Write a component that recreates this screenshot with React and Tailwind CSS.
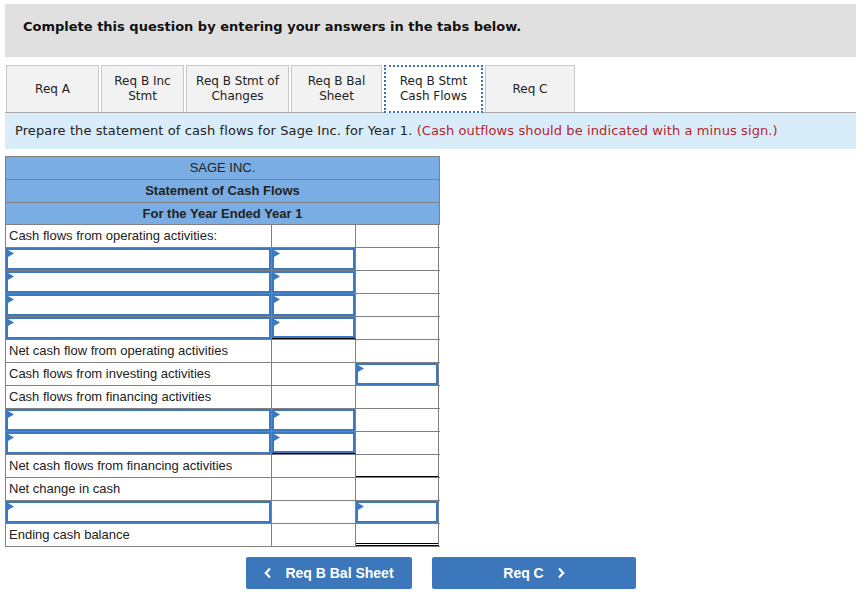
import React from "react";

const tabs = [
  ["Req A"],
  ["Req B Inc", "Stmt"],
  ["Req B Stmt of", "Changes"],
  ["Req B Bal", "Sheet"],
  ["Req B Stmt", "Cash Flows"],
  ["Req C"],
];
const tabW = ["w-[93px]", "w-[83px]", "w-[103px]", "w-[91px]", "w-[99px]", "w-[90px]"];

// in1/in2/in3 = input cell in that column, b = black rule under cell, d3 = double rule
const rows = [
  { label: "Cash flows from operating activities:" },
  { in1: true, in2: true },
  { in1: true, in2: true },
  { in1: true, in2: true },
  { in1: true, in2: true, b2: true },
  { label: "Net cash flow from operating activities" },
  { label: "Cash flows from investing activities", in3: true },
  { label: "Cash flows from financing activities" },
  { in1: true, in2: true },
  { in1: true, in2: true, b2: true },
  { label: "Net cash flows from financing activities", b3: true },
  { label: "Net change in cash" },
  { in1: true, in3: true },
  { label: "Ending cash balance", d3: true },
];

function Tri() {
  return (
    <svg className="absolute left-0 top-0" width="6" height="7" viewBox="0 0 6 7">
      <path d="M0 0 L6 3.5 L0 7 Z" fill="#3b78c2" />
    </svg>
  );
}

function Input() {
  return (
    <div className="relative h-full border-2 border-[#3b78c2] bg-white">
      <Tri />
    </div>
  );
}

export default function App() {
  return (
    <div className="w-[866px] h-[608px] bg-white relative" style={{ fontFamily: "'DejaVu Sans', Verdana, sans-serif" }}>
      <div className="pt-1 pl-[5px]">
        <div className="w-[851px] h-[53px] bg-[#e0e0e0] pl-[18px] pt-[13px] text-[13px] font-bold text-[#111]">
          Complete this question by entering your answers in the tabs below.
        </div>
      </div>

      {/* tabs */}
      <div className="ml-[5px] w-[851px] mt-2 flex items-end gap-[2px] pl-[1px] border-b border-[#aaa] h-[48px]">
        {tabs.map((t, i) => {
          const active = i === 4;
          return (
            <div
              key={i}
              className={
                tabW[i] +
                " flex flex-col items-center justify-center text-[12px] leading-[15px] text-[#222] " +
                (active
                  ? "bg-white border-2 border-dotted border-[#3b6fb6] -mb-[1px] h-[48px]"
                  : "bg-[#f2f2f2] border border-b-0 border-[#c8c8c8] h-[47px]")
              }
            >
              {t.map((l, j) => (
                <span key={j}>{l}</span>
              ))}
            </div>
          );
        })}
      </div>

      <div className="ml-[5px] w-[851px] h-[36px] bg-[#d9ecf9] pl-[10px] flex items-center text-[13px] tracking-[0.1px] text-[#222]">
        Prepare the statement of cash flows for Sage Inc. for Year 1.&nbsp;
        <span className="text-[#b5252b]">(Cash outflows should be indicated with a minus sign.)</span>
      </div>

      {/* table */}
      <div className="ml-[5px] mt-[7px] w-[435px] text-[13px] text-[#222]" style={{ fontFamily: "'Liberation Sans', Arial, sans-serif" }}>
        <div className="border border-b-0 border-[#808080] bg-[#7aade4]">
          <div className="h-[23px] flex items-center justify-center border-b border-[#808080]">SAGE INC.</div>
          <div className="h-[23px] flex items-center justify-center border-b border-[#808080] font-bold">Statement of Cash Flows</div>
          <div className="h-[22px] flex items-center justify-center border-b border-[#808080] font-bold">For the Year Ended Year 1</div>
        </div>
        <div className="border-l border-[#808080]">
          {rows.map((r, i) => (
            <div key={i} className="flex h-[23px] border-b border-[#808080]">
              <div className="w-[266px] border-r border-[#808080] h-full">
                {r.in1 ? (
                  <Input />
                ) : (
                  <div className="pl-[3px] h-full flex items-center">{r.label}</div>
                )}
              </div>
              <div className={"w-[84px] border-r border-[#808080] h-full " + (r.b2 ? "border-b border-b-black" : "")}>
                {r.in2 && <Input />}
              </div>
              <div
                className={
                  "w-[83px] border-r border-[#808080] h-full " +
                  (r.b3 ? "border-b border-b-black " : "") +
                  (r.d3 ? "border-b-[3px] border-double border-b-black" : "")
                }
              >
                {r.in3 && <Input />}
              </div>
            </div>
          ))}
        </div>
      </div>

      {/* nav buttons */}
      <div className="mt-[10px] flex gap-[20px] pl-[246px]" style={{ fontFamily: "'Liberation Sans', Arial, sans-serif" }}>
        <button className="w-[166px] h-[32px] rounded-[2px] bg-[#3c77bc] text-white font-bold text-[14px] flex items-center justify-center gap-[13px]">
          <svg width="8" height="12" viewBox="0 0 8 12">
            <path d="M6 1.5 L1.8 6 L6 10.5" stroke="white" strokeWidth="2.2" fill="none" />
          </svg>
          Req B Bal Sheet
        </button>
        <button className="w-[204px] h-[32px] rounded-[2px] bg-[#3c77bc] text-white font-bold text-[14px] flex items-center justify-center gap-[13px]">
          Req C
          <svg width="8" height="12" viewBox="0 0 8 12">
            <path d="M2 1.5 L6.2 6 L2 10.5" stroke="white" strokeWidth="2.2" fill="none" />
          </svg>
        </button>
      </div>
    </div>
  );
}
